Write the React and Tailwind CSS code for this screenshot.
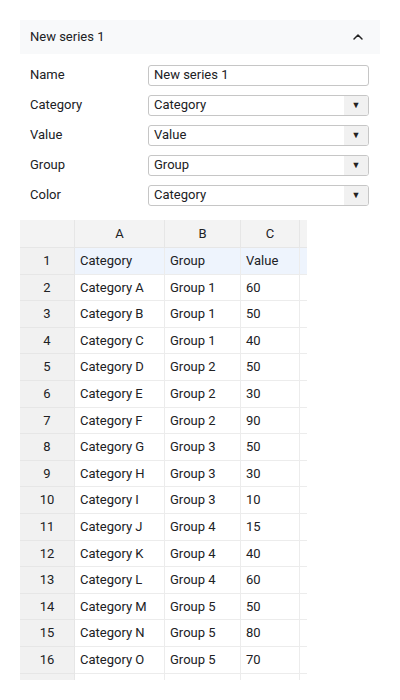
import { ChevronUp } from 'lucide-react';

const rows = [
  ['Category', 'Group', 'Value'],
  ['Category A', 'Group 1', '60'],
  ['Category B', 'Group 1', '50'],
  ['Category C', 'Group 1', '40'],
  ['Category D', 'Group 2', '50'],
  ['Category E', 'Group 2', '30'],
  ['Category F', 'Group 2', '90'],
  ['Category G', 'Group 3', '50'],
  ['Category H', 'Group 3', '30'],
  ['Category I', 'Group 3', '10'],
  ['Category J', 'Group 4', '15'],
  ['Category K', 'Group 4', '40'],
  ['Category L', 'Group 4', '60'],
  ['Category M', 'Group 5', '50'],
  ['Category N', 'Group 5', '80'],
  ['Category O', 'Group 5', '70'],
];

function Select({ value }) {
  return (
    <div className="flex h-[21px] w-[221px] overflow-hidden rounded-[3px] border border-[#c6c6c6] bg-white">
      <div className="flex flex-1 items-center px-[5px] text-[13px] text-[#202124]">{value}</div>
      <div className="flex w-[24px] items-center justify-center bg-[#f1f1f1]">
        <span className="text-[9px] leading-none text-[#222]">▼</span>
      </div>
    </div>
  );
}

export default function App() {
  return (
    <div className="h-[700px] w-[400px] bg-white pt-[20px] font-['Roboto','Liberation_Sans',sans-serif] text-[#202124]">
      <div className="mx-[20px] flex h-[34px] items-center justify-between bg-[#f8f9fa] pl-[10px] pr-[14px]">
        <span className="text-[13px]">New series 1</span>
        <ChevronUp size={16} strokeWidth={2.2} className="text-[#222]" />
      </div>

      <div className="mx-[20px] mt-[6px] pl-[10px] pr-[11px] text-[13px]">
        <div className="flex h-[30px] items-center">
          <div className="w-[118px]">Name</div>
          <div className="flex h-[21px] w-[221px] items-center rounded-[3px] border border-[#c6c6c6] px-[5px]">New series 1</div>
        </div>
        <div className="flex h-[30px] items-center">
          <div className="w-[118px]">Category</div>
          <Select value="Category" />
        </div>
        <div className="flex h-[30px] items-center">
          <div className="w-[118px]">Value</div>
          <Select value="Value" />
        </div>
        <div className="flex h-[30px] items-center">
          <div className="w-[118px]">Group</div>
          <Select value="Group" />
        </div>
        <div className="flex h-[30px] items-center">
          <div className="w-[118px]">Color</div>
          <Select value="Category" />
        </div>
      </div>

      <div className="ml-[20px] mt-[10px] h-[460px] w-[287px] overflow-hidden text-[13px]">
        <div className="grid h-[28px] grid-cols-[55px_90px_76px_59px_7px] bg-[#f3f3f3]">
          <div className="border-r border-b border-[#e6e6e6]"></div>
          <div className="flex items-center justify-center border-r border-b border-[#e6e6e6]">A</div>
          <div className="flex items-center justify-center border-r border-b border-[#e6e6e6]">B</div>
          <div className="flex items-center justify-center border-r border-b border-[#e6e6e6]">C</div>
          <div className="border-b border-[#e6e6e6]"></div>
        </div>
        {rows.map((r, i) => (
          <div
            key={i}
            className={`grid h-[26.6px] grid-cols-[55px_90px_76px_59px_7px] ${i === 0 ? 'bg-[#eef4fd]' : 'bg-white'}`}
          >
            <div className="flex items-center justify-center border-r border-b border-[#e6e6e6] bg-[#f1f1f1]">{i + 1}</div>
            <div className="flex items-center border-r border-b border-[#ececec] pl-[5px]">{r[0]}</div>
            <div className="flex items-center border-r border-b border-[#ececec] pl-[5px]">{r[1]}</div>
            <div className="flex items-center border-r border-b border-[#ececec] pl-[5px]">{r[2]}</div>
            <div className="border-b border-[#ececec]"></div>
          </div>
        ))}
        <div className="grid h-[26.6px] grid-cols-[55px_90px_76px_59px_7px] bg-white">
          <div className="border-r border-[#e6e6e6] bg-[#f1f1f1]"></div>
          <div className="border-r border-[#ececec]"></div>
          <div className="border-r border-[#ececec]"></div>
          <div className="border-r border-[#ececec]"></div>
          <div></div>
        </div>
      </div>
    </div>
  );
}
